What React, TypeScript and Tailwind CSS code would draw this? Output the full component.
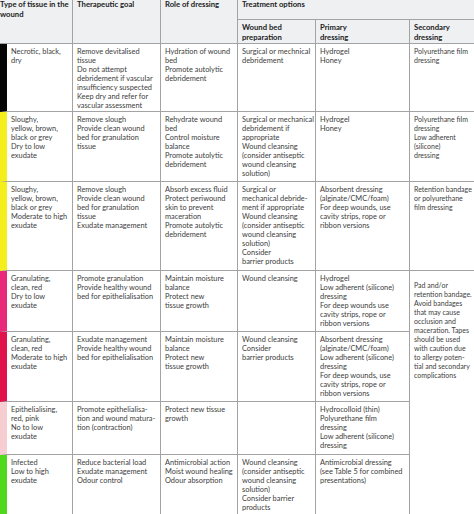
import React from 'react'

type Row = {
  color: string
  tissue: string[]
  goal: string[]
  role: string[]
  prep: string[]
  primary: string[]
  secondary?: string[]
}

const ROWS: Row[] = [
  {
    color: 'border-l-[#050505]',
    tissue: ['Necrotic, black,', 'dry'],
    goal: ['Remove devitalised', 'tissue', 'Do not attempt', 'debridement if vascular', 'insufficiency suspected', 'Keep dry and refer for', 'vascular assessment'],
    role: ['Hydration of wound', 'bed', 'Promote autolytic', 'debridement'],
    prep: ['Surgical or mechnical', 'debridement'],
    primary: ['Hydrogel', 'Honey'],
    secondary: ['Polyurethane film', 'dressing'],
  },
  {
    color: 'border-l-[#f3ee1c]',
    tissue: ['Sloughy,', 'yellow, brown,', 'black or grey', 'Dry to low', 'exudate'],
    goal: ['Remove slough', 'Provide clean wound', 'bed for granulation', 'tissue'],
    role: ['Rehydrate wound', 'bed', 'Control moisture', 'balance', 'Promote autolytic', 'debridement'],
    prep: ['Surgical or mechanical', 'debridement if', 'appropriate', 'Wound cleansing', '(consider antiseptic', 'wound cleansing', 'solution)'],
    primary: ['Hydrogel', 'Honey'],
    secondary: ['Polyurethane film', 'dressing', 'Low adherent', '(silicone)', 'dressing'],
  },
  {
    color: 'border-l-[#f3ee1c]',
    tissue: ['Sloughy,', 'yellow, brown,', 'black or grey', 'Moderate to high', 'exudate'],
    goal: ['Remove slough', 'Provide clean wound', 'bed for granulation', 'tissue', 'Exudate management'],
    role: ['Absorb excess fluid', 'Protect periwound', 'skin to prevent', 'maceration', 'Promote autolytic', 'debridement'],
    prep: ['Surgical or', 'mechanical debride-', 'ment if appropriate', 'Wound cleansing', '(consider antiseptic', 'wound cleansing', 'solution)', 'Consider', 'barrier products'],
    primary: ['Absorbent dressing', '(alginate/CMC/foam)', 'For deep wounds, use', 'cavity strips, rope or', 'ribbon versions'],
    secondary: ['Retention bandage', 'or polyurethane', 'film dressing'],
  },
  {
    color: 'border-l-[#e8297a]',
    tissue: ['Granulating,', 'clean, red', 'Dry to low', 'exudate'],
    goal: ['Promote granulation', 'Provide healthy wound', 'bed for epithelialisation'],
    role: ['Maintain moisture', 'balance', 'Protect new', 'tissue growth'],
    prep: ['Wound cleansing'],
    primary: ['Hydrogel', 'Low adherent (silicone)', 'dressing', 'For deep wounds use', 'cavity strips, rope or', 'ribbon versions'],
  },
  {
    color: 'border-l-[#e0124b]',
    tissue: ['Granulating,', 'clean, red', 'Moderate to high', 'exudate'],
    goal: ['Exudate management', 'Provide healthy wound', 'bed for epithelialisation'],
    role: ['Maintain moisture', 'balance', 'Protect new', 'tissue growth'],
    prep: ['Wound cleansing', 'Consider', 'barrier products'],
    primary: ['Absorbent dressing', '(alginate/CMC/foam)', 'Low adherent (silicone)', 'dressing', 'For deep wounds, use', 'cavity strips, rope or', 'ribbon versions'],
  },
  {
    color: 'border-l-[#f6cdd0]',
    tissue: ['Epithelialising,', 'red, pink', 'No to low', 'exudate'],
    goal: ['Promote epithelialisa-', 'tion and wound matura-', 'tion (contraction)'],
    role: ['Protect new tissue', 'growth'],
    prep: [],
    primary: ['Hydrocolloid (thin)', 'Polyurethane film', 'dressing', 'Low adherent (silicone)', 'dressing'],
  },
  {
    color: 'border-l-[#4fd81c]',
    tissue: ['Infected', 'Low to high', 'exudate'],
    goal: ['Reduce bacterial load', 'Exudate management', 'Odour control'],
    role: ['Antimicrobial action', 'Moist wound healing', 'Odour absorption'],
    prep: ['Wound cleansing', '(consider antiseptic', 'wound cleansing', 'solution)', 'Consider barrier', 'products'],
    primary: ['Antimicrobial dressing', '(see Table 5 for combined', 'presentations)'],
  },
]

const SHARED_SECONDARY = ['Pad and/or', 'retention bandage.', 'Avoid bandages', 'that may cause', 'occlusion and', 'maceration. Tapes', 'should be used', 'with caution due', 'to allergy poten-', 'tial and secondary', 'complications']

const cell = 'border-r border-b border-[#a3a3a3]'

function Lines({ lines }: { lines: string[] }) {
  return (
    <>
      {lines.map((l, i) => (
        <div key={i} className="whitespace-nowrap">{l}</div>
      ))}
    </>
  )
}

function Head({ lines, className = '' }: { lines: string[]; className?: string }) {
  return (
    <div className={`${cell} bg-[#eef0f2] font-bold text-[7.7px] text-[#222] leading-[9.5px] ${className}`}>
      <Lines lines={lines} />
    </div>
  )
}

export default function App() {
  return (
    <div className="w-[474px] h-[514px] overflow-hidden bg-white">
      <div
        className="grid w-[490px] grid-cols-[73px_88px_77px_78px_94px_80px] grid-rows-[20px_24px_68px_70px_89px_61px_70px_53px_62px] text-[7.4px] leading-[9px] text-[#3d3d3d]"
        style={{ fontFamily: 'Lato, "Open Sans", sans-serif' }}
      >
        {/* header */}
        <Head lines={['Type of tissue in the', 'wound']} className="row-span-2 pl-0 pt-0" />
        <Head lines={['Therapeutic goal']} className="row-span-2 pl-1 pt-0" />
        <Head lines={['Role of dressing']} className="row-span-2 pl-1 pt-0" />
        <Head lines={['Treatment options']} className="col-span-3 pl-1 pt-0" />
        <Head lines={['Wound bed', 'preparation']} className="pl-1 pt-[3px]" />
        <Head lines={['Primary', 'dressing']} className="pl-1 pt-[3px]" />
        <Head lines={['Secondary', 'dressing']} className="pl-1 pt-[3px]" />

        {/* body */}
        {ROWS.map((r, i) => (
          <React.Fragment key={i}>
            <div className={`${cell} border-l-[7px] ${r.color} pl-1 pt-[3px]`}>
              <Lines lines={r.tissue} />
            </div>
            <div className={`${cell} pl-1 pt-[3px]`}><Lines lines={r.goal} /></div>
            <div className={`${cell} pl-1 pt-[3px]`}><Lines lines={r.role} /></div>
            <div className={`${cell} pl-1 pt-[3px]`}><Lines lines={r.prep} /></div>
            <div className={`${cell} pl-1 pt-[3px]`}><Lines lines={r.primary} /></div>
            {r.secondary && (
              <div className={`${cell} pl-1 pt-[3px] text-[7px]`}><Lines lines={r.secondary} /></div>
            )}
            {i === 3 && (
              <div className={`${cell} row-span-4 pl-1 pt-[10px] text-[7px]`}>
                <Lines lines={SHARED_SECONDARY} />
              </div>
            )}
          </React.Fragment>
        ))}
      </div>
    </div>
  )
}
